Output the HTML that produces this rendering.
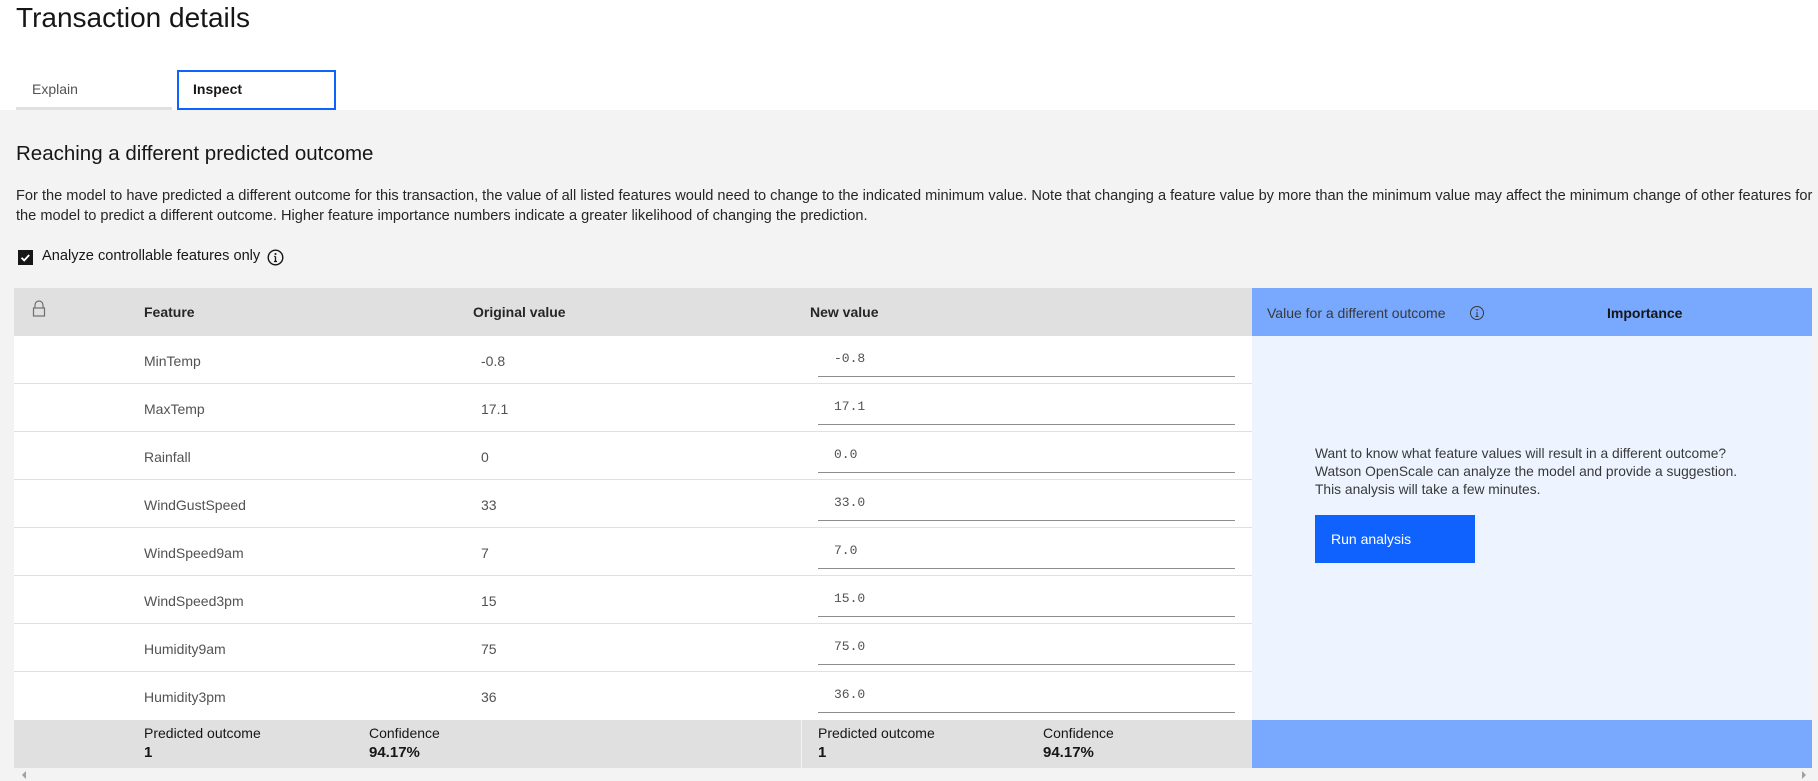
<!DOCTYPE html>
<html><head><meta charset="utf-8"><style>
*{box-sizing:border-box;margin:0;padding:0}
body{width:1818px;height:781px;overflow:hidden;background:#fff;font-family:"Liberation Sans",sans-serif;color:#161616;position:relative}
.a{position:absolute;white-space:nowrap}
.mono{font-family:"Liberation Mono",monospace}
</style></head><body>
<div class="a" style="left:16px;top:2px;font-size:28px;font-weight:300;color:#161616">Transaction details</div>
<div class="a" style="left:16px;top:107px;width:156px;height:3px;background:#e0e0e0"></div>
<div class="a" style="left:32px;top:81px;font-size:14px;color:#525252">Explain</div>
<div class="a" style="left:177px;top:70px;width:159px;height:40px;border:2px solid #0f62fe;background:#fff"></div>
<div class="a" style="left:193px;top:81px;font-size:14px;font-weight:bold;color:#161616">Inspect</div>
<div class="a" style="left:0;top:110px;width:1818px;height:671px;background:#f3f3f3"></div>
<div class="a" style="left:16px;top:142px;font-size:20.5px;color:#161616">Reaching a different predicted outcome</div>
<div class="a" style="left:16px;top:186px;font-size:14.6px;line-height:20px;color:#262626;white-space:normal;width:1800px">For the model to have predicted a different outcome for this transaction, the value of all listed features would need to change to the indicated minimum value. Note that changing a feature value by more than the minimum value may affect the minimum change of other features for the model to predict a different outcome. Higher feature importance numbers indicate a greater likelihood of changing the prediction.</div>
<div class="a" style="left:18px;top:250px;width:15px;height:15px;background:#161616"></div>
<svg class="a" style="left:18px;top:250px" width="15" height="15"><path d="M3.5 7.7l2.7 2.7 5-5.4" stroke="#fff" stroke-width="1.8" fill="none"/></svg>
<div class="a" style="left:42px;top:248px;font-size:14.6px">Analyze controllable features only</div>
<svg class="a" style="left:267px;top:249px" width="17" height="17"><circle cx="8.5" cy="8.5" r="7.3" stroke="#161616" stroke-width="1.4" fill="none"/><path d="M8.5 7.5v5M7 12.5h3M7.2 7.5h1.3" stroke="#161616" stroke-width="1.3"/><circle cx="8.5" cy="5" r="1" fill="#161616"/></svg>

<div class="a" style="left:14px;top:288px;width:1238px;height:48px;background:#e0e0e0"></div>
<svg class="a" style="left:32px;top:300px" width="14" height="18"><path d="M3 8V5a4 4 0 0 1 8 0v3" stroke="#6f6f6f" stroke-width="1.2" fill="none"/><rect x="1.5" y="8" width="11" height="8" stroke="#6f6f6f" stroke-width="1.2" fill="none"/></svg>
<div class="a" style="left:144px;top:304px;font-size:14px;font-weight:bold;color:#262626">Feature</div>
<div class="a" style="left:473px;top:304px;font-size:14px;font-weight:bold;color:#262626">Original value</div>
<div class="a" style="left:810px;top:304px;font-size:14px;font-weight:bold;color:#262626">New value</div>
<div class="a" style="left:14px;top:336px;width:1238px;height:384px;background:#fff"></div>

<div class="a" style="left:1252px;top:288px;width:560px;height:48px;background:#78a9ff"></div>
<div class="a" style="left:1267px;top:305px;font-size:14px;color:#393939">Value for a different outcome</div>
<svg class="a" style="left:1469px;top:305px" width="16" height="16"><circle cx="8" cy="8" r="6.5" stroke="#393939" stroke-width="1" fill="none"/><path d="M8 7v4.5M6.5 11.5h3" stroke="#393939" stroke-width="1"/><circle cx="8" cy="5" r=".8" fill="#393939"/></svg>
<div class="a" style="left:1607px;top:305px;font-size:14px;font-weight:bold;color:#161616">Importance</div>
<div class="a" style="left:1252px;top:336px;width:560px;height:384px;background:#edf4ff"></div>
<div class="a" style="left:1315px;top:445px;font-size:13.8px;line-height:18px;color:#393939">Want to know what feature values will result in a different outcome?<br>Watson OpenScale can analyze the model and provide a suggestion.<br>This analysis will take a few minutes.</div>
<div class="a" style="left:1315px;top:515px;width:160px;height:48px;background:#0f62fe"></div>
<div class="a" style="left:1331px;top:531px;font-size:14px;color:#fff">Run analysis</div>

<div id="rows"></div>
<div class="a" style="left:14px;top:720px;width:1238px;height:48px;background:#e0e0e0"></div>
<div class="a" style="left:801px;top:720px;width:1px;height:48px;background:#f4f4f4"></div>
<div class="a" style="left:1252px;top:720px;width:560px;height:48px;background:#78a9ff"></div>
<div class="a" style="left:144px;top:725px;font-size:14px;line-height:17px;color:#161616">Predicted outcome<br><span style="font-weight:bold;font-size:15px;line-height:22px">1</span></div>
<div class="a" style="left:369px;top:725px;font-size:14px;line-height:17px;color:#161616">Confidence<br><span style="font-weight:bold;font-size:15px;line-height:22px">94.17%</span></div>
<div class="a" style="left:818px;top:725px;font-size:14px;line-height:17px;color:#161616">Predicted outcome<br><span style="font-weight:bold;font-size:15px;line-height:22px">1</span></div>
<div class="a" style="left:1043px;top:725px;font-size:14px;line-height:17px;color:#161616">Confidence<br><span style="font-weight:bold;font-size:15px;line-height:22px">94.17%</span></div>
<div class="a" style="left:22px;top:771px;width:0;height:0;border-top:4px solid transparent;border-bottom:4px solid transparent;border-right:4px solid #a0a0a0"></div>
<div class="a" style="left:1802px;top:771px;width:0;height:0;border-top:4px solid transparent;border-bottom:4px solid transparent;border-left:4px solid #a0a0a0"></div>
<script>
var d=[["MinTemp","-0.8","-0.8"],["MaxTemp","17.1","17.1"],["Rainfall","0","0.0"],["WindGustSpeed","33","33.0"],["WindSpeed9am","7","7.0"],["WindSpeed3pm","15","15.0"],["Humidity9am","75","75.0"],["Humidity3pm","36","36.0"]];
var h="";d.forEach(function(r,i){var t=336+i*48;
h+='<div class="a" style="left:144px;top:'+(t+17)+'px;font-size:14px;color:#525252">'+r[0]+'</div>';
h+='<div class="a" style="left:481px;top:'+(t+17)+'px;font-size:14px;color:#525252">'+r[1]+'</div>';
h+='<div class="a mono" style="left:834px;top:'+(t+15)+'px;font-size:13px;color:#525252">'+r[2]+'</div>';
h+='<div class="a" style="left:818px;top:'+(t+40)+'px;width:417px;height:1px;background:#8d8d8d"></div>';
if(i<7)h+='<div class="a" style="left:14px;top:'+(t+47)+'px;width:1238px;height:1px;background:#e0e0e0"></div>';});
document.getElementById("rows").outerHTML=h;
</script>
</body></html>
